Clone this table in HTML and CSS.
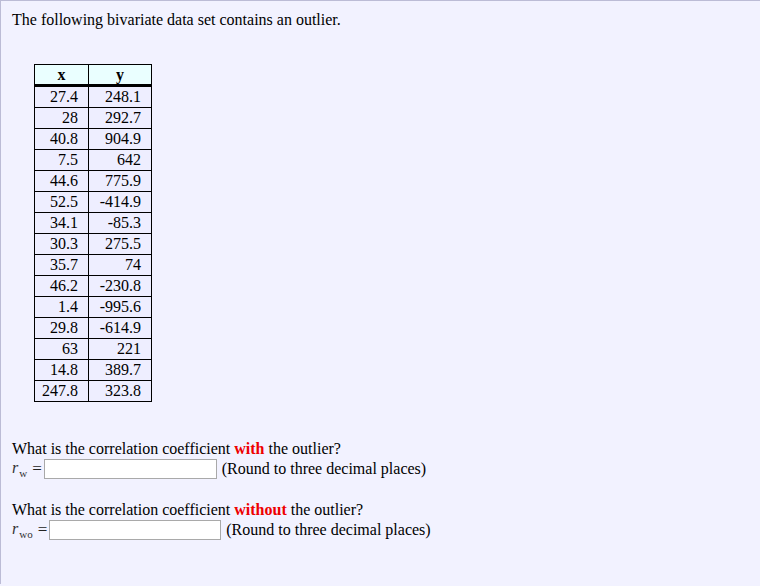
FILE: index.html
```html
<!DOCTYPE html>
<html>
<head>
<meta charset="utf-8">
<link rel="stylesheet" href="styles.css">
</head>
<body>
<div class="page">
  <p class="intro">The following bivariate data set contains an outlier.</p>
  <table class="data">
    <thead>
      <tr><th class="cx">x</th><th class="cy">y</th></tr>
    </thead>
    <tbody>
      <tr><td>27.4</td><td>248.1</td></tr>
      <tr><td>28</td><td>292.7</td></tr>
      <tr><td>40.8</td><td>904.9</td></tr>
      <tr><td>7.5</td><td>642</td></tr>
      <tr><td>44.6</td><td>775.9</td></tr>
      <tr><td>52.5</td><td>-414.9</td></tr>
      <tr><td>34.1</td><td>-85.3</td></tr>
      <tr><td>30.3</td><td>275.5</td></tr>
      <tr><td>35.7</td><td>74</td></tr>
      <tr><td>46.2</td><td>-230.8</td></tr>
      <tr><td>1.4</td><td>-995.6</td></tr>
      <tr><td>29.8</td><td>-614.9</td></tr>
      <tr><td>63</td><td>221</td></tr>
      <tr><td>14.8</td><td>389.7</td></tr>
      <tr><td>247.8</td><td>323.8</td></tr>
    </tbody>
  </table>

  <div class="question">
    <p class="qtext">What is the correlation coefficient <span class="em">with</span> the outlier?</p>
    <div class="answer">
      <span class="var"><i>r</i><sub>w</sub></span><span class="eq">=</span><input class="box box-w" type="text"><span class="hint">(Round to three decimal places)</span>
    </div>
  </div>

  <div class="question q2">
    <p class="qtext">What is the correlation coefficient <span class="em">without</span> the outlier?</p>
    <div class="answer">
      <span class="var"><i>r</i><sub>wo</sub></span><span class="eq">=</span><input class="box box-wo" type="text"><span class="hint">(Round to three decimal places)</span>
    </div>
  </div>
</div>
</body>
</html>
```

FILE: styles.css
```css
html, body {
  margin: 0;
  padding: 0;
  background: #f2f2ff;
}

body {
  font-family: "Liberation Serif", "Times New Roman", serif;
  font-size: 16px;
  color: #000;
}

.page {
  min-height: 584px;
  border-top: 1px solid #bcbcd6;
  border-left: 1px solid #bcbcd6;
  padding: 10px 11px 0 11px;
  box-sizing: border-box;
}

.intro {
  margin: 0;
  line-height: 18px;
}

.data {
  margin: 35px 0 0 22px;
  border-collapse: collapse;
  line-height: 18px;
}

.data th {
  background: #eaffff;
  border: 1px solid #000;
  border-bottom: 3px solid #000;
  font-weight: bold;
  text-align: center;
  height: 19px;
  padding: 0;
}

.data .cx { width: 53px; }
.data .cy { width: 62px; }

.data td {
  background: #eeeeff;
  border: 1px solid #000;
  text-align: right;
  padding: 1px 10px 1px 4px;
  height: 18px;
}

.question {
  margin-top: 38px;
}

.q2 {
  margin-top: 22px;
}

.qtext {
  margin: 0;
  line-height: 18px;
}

.em {
  color: #ee0000;
  font-weight: bold;
}

.answer {
  display: flex;
  align-items: center;
  margin-top: 1px;
  height: 20px;
}

.var {
  color: #333;
  font-size: 16px;
  white-space: nowrap;
}

.var i {
  font-style: italic;
}

.var sub {
  font-size: 11px;
  vertical-align: -4px;
  margin-left: 1px;
}

.eq {
  margin: 0 2px 0 5px;
  color: #222;
  font-size: 17px;
}

.box {
  box-sizing: border-box;
  height: 20px;
  border: 1px solid #a9a9a9;
  background: #fff;
  padding: 0;
  margin: 0 5px 0 0;
}

.box-w { width: 173px; }
.box-wo { width: 172px; }

.hint {
  white-space: nowrap;
}
```
